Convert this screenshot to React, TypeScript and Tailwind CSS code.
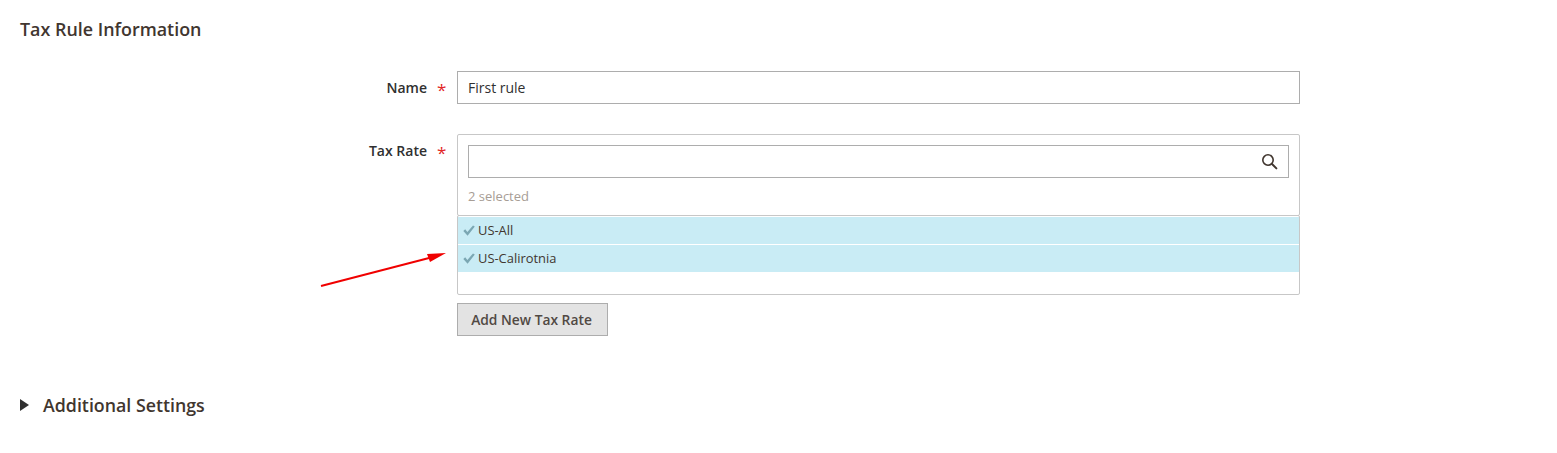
import React from "react";

function Check() {
  return (
    <svg width="12" height="11" viewBox="0 0 12 11" className="shrink-0">
      <path d="M0.3 6 L2.2 4.2 L4.4 6.9 L10 0.4 L11.8 1.6 L4.6 10.8 Z" fill="#7ba7b3" />
    </svg>
  );
}

function Row({ children }: { children: React.ReactNode }) {
  return (
    <div className="flex h-[28px] items-center gap-[3px] border-b border-white bg-[#c9ecf5] pl-[5px] text-[12.9px] text-[#41362f]">
      <Check />
      <span>{children}</span>
    </div>
  );
}

function Label({ text }: { text: string }) {
  return (
    <div className="flex w-[437px] justify-end gap-[10px] pt-[7px] pr-[12px]">
      <span className="text-[14px] leading-[20px] font-semibold text-[#303030]">{text}</span>
      <span className="w-[8px] text-[17px] leading-[23px] text-[#e22626]">*</span>
    </div>
  );
}

export default function App() {
  return (
    <div className="relative h-[453px] w-[1557px] overflow-hidden bg-white pl-5 font-['Open_Sans',sans-serif] text-[#303030]">
      <h2 className="pt-[17px] text-[17.9px] leading-[24px] font-semibold text-[#41362f]">Tax Rule Information</h2>

      <div className="mt-[30px] flex h-[33px]">
        <Label text="Name" />
        <div className="flex h-[33px] w-[843px] items-center border border-[#adadad] px-[10px] text-[14px] text-[#303030]">
          First rule
        </div>
      </div>

      <div className="mt-[30px] flex">
        <Label text="Tax Rate" />
        <div className="w-[843px]">
          <div className="h-[82px] rounded-[2px] border border-[#c7c7c7] px-[10px] pt-[10px]">
            <div className="flex h-[33px] items-center justify-end border border-[#adadad] pr-[10px]">
              <svg width="17" height="17" viewBox="0 0 17 17" fill="none">
                <circle cx="7" cy="7" r="5.2" stroke="#41362f" strokeWidth="1.6" />
                <path d="M11 11 L15.4 15.4" stroke="#41362f" strokeWidth="2" strokeLinecap="round" />
              </svg>
            </div>
            <div className="mt-[9px] text-[13px] leading-[18px] text-[#a79d95]">2 selected</div>
          </div>
          <div className="-mt-px h-[80px] rounded-[2px] border border-[#c7c7c7] pt-px">
            <Row>US-All</Row>
            <Row>US-Calirotnia</Row>
          </div>
          <button className="mt-[8px] h-[33px] w-[151px] border border-[#adadad] bg-[#e3e3e3] pt-px pr-[2px] text-[13.8px] font-semibold text-[#514943]">
            Add New Tax Rate
          </button>
        </div>
      </div>

      <div className="mt-[57px] flex items-center gap-[14px]">
        <svg width="9" height="12" viewBox="0 0 9 12">
          <path d="M0 0 L9 6 L0 12 Z" fill="#303030" />
        </svg>
        <span className="text-[17.8px] leading-[24px] font-semibold text-[#41362f]">Additional Settings</span>
      </div>

      <svg className="absolute top-[250px] left-[318px]" width="130" height="40" viewBox="318 250 130 40">
        <path d="M321 286 L431 257.5" stroke="#f00000" strokeWidth="2" fill="none" />
        <path d="M446 253 L427 254 L430 262 Z" fill="#f00000" />
      </svg>
    </div>
  );
}
